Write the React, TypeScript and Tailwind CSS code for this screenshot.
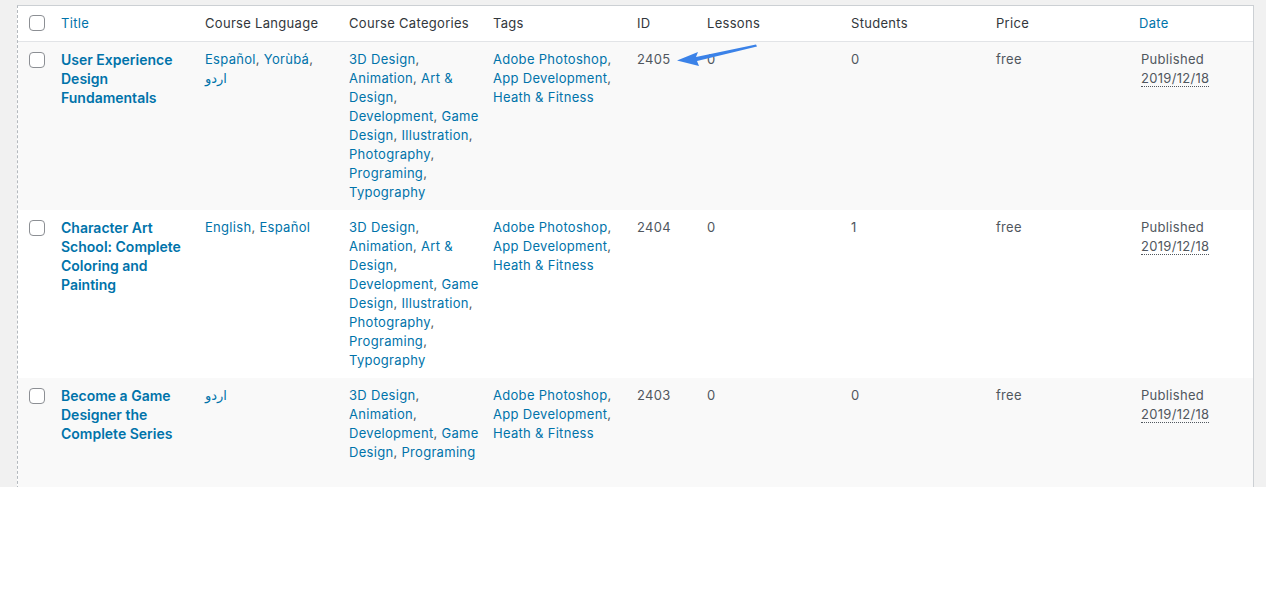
import React from "react";

type Course = {
  title: string;
  langs: string[];
  cats: string[];
  tags: string[];
  id: string;
  lessons: string;
  students: string;
  price: string;
  date: string;
};

const tags = ["Adobe Photoshop", "App Development", "Heath & Fitness"];

const courses: Course[] = [
  {
    title: "User Experience Design Fundamentals",
    langs: ["Español", "Yorùbá", "اردو"],
    cats: ["3D Design", "Animation", "Art & Design", "Development", "Game Design", "Illustration", "Photography", "Programing", "Typography"],
    tags,
    id: "2405",
    lessons: "0",
    students: "0",
    price: "free",
    date: "2019/12/18",
  },
  {
    title: "Character Art School: Complete Coloring and Painting",
    langs: ["English", "Español"],
    cats: ["3D Design", "Animation", "Art & Design", "Development", "Game Design", "Illustration", "Photography", "Programing", "Typography"],
    tags,
    id: "2404",
    lessons: "0",
    students: "1",
    price: "free",
    date: "2019/12/18",
  },
  {
    title: "Become a Game Designer the Complete Series",
    langs: ["اردو"],
    cats: ["3D Design", "Animation", "Development", "Game Design", "Programing"],
    tags,
    id: "2403",
    lessons: "0",
    students: "0",
    price: "free",
    date: "2019/12/18",
  },
];

const Checkbox = () => (
  <span className="block w-4 h-4 rounded-[4px] border border-[#8c8f94] bg-white" />
);

const LinkList = ({ items }: { items: string[] }) => (
  <>
    {items.map((it, i) => (
      <React.Fragment key={i}>
        <a className="text-[#0073aa]">{it}</a>
        {i < items.length - 1 ? ", " : ""}
      </React.Fragment>
    ))}
  </>
);

const th = "text-left font-normal text-[13px] leading-[19px] tracking-[0.3px] py-2 pl-[10px] pr-[2px] text-[#32373c] align-top";
const td = "align-top py-2 pl-[10px] pr-[2px] text-[13px] leading-[19px] tracking-[0.3px] text-[#50575e]";

export default function App() {
  return (
    <div className="w-full bg-white" style={{ fontFamily: "Inter, 'Noto Sans', 'DejaVu Sans', sans-serif" }}>
      <div className="h-[487px] overflow-hidden bg-[#f1f1f1] pt-[5px] pl-[17px] pr-[12px]">
        <div className="relative bg-white border border-[#ccd0d4] [border-left-style:dashed] border-l-[#b4b9be]">
          <table className="table-fixed w-full border-collapse">
            <colgroup>
              <col className="w-[33px]" />
              <col className="w-[144px]" />
              <col className="w-[144px]" />
              <col className="w-[144px]" />
              <col className="w-[144px]" />
              <col className="w-[70px]" />
              <col className="w-[144px]" />
              <col className="w-[145px]" />
              <col className="w-[143px]" />
              <col className="w-[124px]" />
            </colgroup>
            <thead>
              <tr className="border-b border-[#e2e4e7]">
                <th className="pt-[9px] pl-[11px] align-top">
                  <Checkbox />
                </th>
                <th className={th}>
                  <a className="text-[#0073aa]">Title</a>
                </th>
                <th className={th}>Course Language</th>
                <th className={th}>Course Categories</th>
                <th className={th}>Tags</th>
                <th className={th}>ID</th>
                <th className={th}>Lessons</th>
                <th className={th}>Students</th>
                <th className={th}>Price</th>
                <th className={th}>
                  <a className="text-[#0073aa]">Date</a>
                </th>
              </tr>
            </thead>
            <tbody>
              {courses.map((c, i) => (
                <tr
                  key={c.id}
                  className={(i % 2 === 0 ? "bg-[#f9f9f9]" : "bg-white") + (i === courses.length - 1 ? " h-[160px]" : "")}
                >
                  <td className="pt-[10px] pl-[11px] align-top">
                    <Checkbox />
                  </td>
                  <td className="align-top py-2 pl-[10px] pr-[6px] text-[14px] leading-[19px] font-semibold text-[#0073aa]">
                    <a>{c.title}</a>
                  </td>
                  <td className={td}>
                    <LinkList items={c.langs} />
                  </td>
                  <td className={td}>
                    <LinkList items={c.cats} />
                  </td>
                  <td className={td}>
                    <LinkList items={c.tags} />
                  </td>
                  <td className={td}>{c.id}</td>
                  <td className={td}>{c.lessons}</td>
                  <td className={td}>{c.students}</td>
                  <td className={td}>{c.price}</td>
                  <td className={td + " !pl-[12px]"}>
                    Published
                    <br />
                    <abbr className="no-underline border-b border-dotted border-[#50575e]">{c.date}</abbr>
                  </td>
                </tr>
              ))}
            </tbody>
          </table>
          <svg className="absolute left-[658px] top-[37px]" width="84" height="24" viewBox="0 0 84 24">
            <path d="M80 1.5 L20 14 L22 9 L1 17.5 L23 23 L21 18 L81 3.5 Z" fill="#3b82e8" />
          </svg>
        </div>
      </div>
    </div>
  );
}
